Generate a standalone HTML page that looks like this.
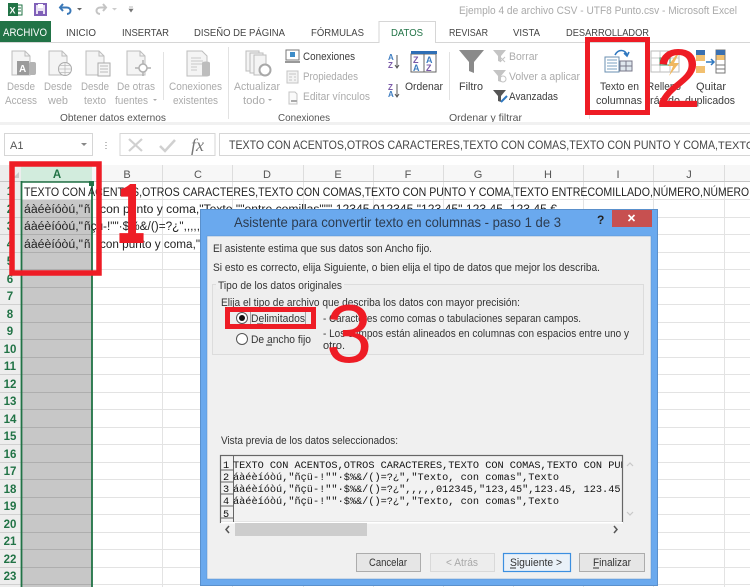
<!DOCTYPE html>
<html><head><meta charset="utf-8"><style>
html,body{margin:0;padding:0;background:#fff;width:750px;height:587px;overflow:hidden}
svg{display:block;filter:blur(.3px)}
text{font-family:"Liberation Sans",sans-serif;font-size:11px;fill:#444;white-space:pre}
.g{fill:#ababab}
.d{fill:#3c3c3c}
.t{font-size:10.5px;fill:#444}
.c{font-size:11.5px;fill:#222}
.h{font-size:11px;fill:#555;text-anchor:middle}
.r{font-size:11.5px;font-weight:bold;fill:#217346;text-anchor:middle}
.m{font-family:"Liberation Mono",monospace;font-size:10.25px;fill:#111}
.n{font-size:11px;fill:#333}
.big{font-size:83px;fill:#ee1c25}
.ic{fill:#f4f4f4;stroke:#bdbdbd;stroke-width:1}
</style></head><body>
<svg width="750" height="587" viewBox="0 0 750 587" xmlns="http://www.w3.org/2000/svg">
<defs><clipPath id="pv"><rect x="233" y="456" width="389" height="66"/></clipPath></defs>
<rect width="750" height="587" fill="#fff"/>

<!-- QAT -->
<rect x="13" y="5" width="9" height="10" fill="#fff" stroke="#217346"/>
<rect x="8" y="3" width="10" height="13" fill="#217346"/>
<text x="9.5" y="13.5" style="font-size:9px;font-weight:bold;fill:#fff">X</text>
<path d="M15 8h6M15 11h6" stroke="#217346"/>
<rect x="35" y="4" width="11" height="11" fill="#e9e2f3" stroke="#8060b8" stroke-width="2"/>
<rect x="38" y="4" width="5" height="4" fill="#fff"/><rect x="38" y="11" width="5" height="4" fill="#8060b8"/>
<path d="M63 4l-3 3.500 3 3.500M60.500 7.500h6c5 0 5.500 6 .5 6.500" fill="none" stroke="#3a78b8" stroke-width="2"/>
<path d="M77 8l2.500 2.500 2.500-2.500z" fill="#666"/>
<path d="M103 4l3 3.500-3 3.500M105.500 7.500h-5c-5 0-5.500 6-.5 6.500" fill="none" stroke="#c4c4c4" stroke-width="2"/>
<path d="M112 8l2.500 2.500 2.500-2.500z" fill="#ccc"/>
<path d="M129 7h4M129 9l2 3 2-3z" fill="#777" stroke="#777" stroke-width=".6"/>
<text x="459" y="14" textLength="278" lengthAdjust="spacingAndGlyphs" style="fill:#aaa;font-size:11px">Ejemplo 4 de archivo CSV - UTF8 Punto.csv - Microsoft Excel</text>

<!-- Tabs -->
<rect x="0" y="21" width="51" height="22" fill="#217346"/>
<path d="M0 42.500H379M436 42.500H750" stroke="#d6d6d6"/>
<path d="M379 43V21.500H435.500V43" fill="#fff" stroke="#d6d6d6"/>
<text x="3" y="36" textLength="44" lengthAdjust="spacingAndGlyphs" style="fill:#fff;font-size:11px">ARCHIVO</text>
<text class="t" x="66" y="36" textLength="30" lengthAdjust="spacingAndGlyphs">INICIO</text>
<text class="t" x="122" y="36" textLength="47" lengthAdjust="spacingAndGlyphs">INSERTAR</text>
<text class="t" x="194" y="36" textLength="91" lengthAdjust="spacingAndGlyphs">DISEÑO DE PÁGINA</text>
<text class="t" x="311" y="36" textLength="53" lengthAdjust="spacingAndGlyphs">FÓRMULAS</text>
<text class="t" x="391" y="36" textLength="32" lengthAdjust="spacingAndGlyphs" style="fill:#217346">DATOS</text>
<text class="t" x="449" y="36" textLength="39" lengthAdjust="spacingAndGlyphs">REVISAR</text>
<text class="t" x="513" y="36" textLength="27" lengthAdjust="spacingAndGlyphs">VISTA</text>
<text class="t" x="566" y="36" textLength="83" lengthAdjust="spacingAndGlyphs">DESARROLLADOR</text>

<!-- Ribbon icons -->
<g id="docs">
<path class="ic" d="M12 51h13l5 5v19H12z"/><path d="M25 51v5h5" fill="none" stroke="#bdbdbd"/>
<rect x="17" y="61" width="12" height="14" fill="#9a9a9a"/><text x="19" y="72" style="font-size:10px;font-weight:bold;fill:#fff">A</text>
<rect x="29" y="62" width="7" height="13" rx="2" fill="#b4b4b4"/>
<path class="ic" d="M49 51h13l5 5v19H49z"/><path d="M62 51v5h5" fill="none" stroke="#bdbdbd"/>
<circle cx="65" cy="69" r="6.500" fill="#f6f6f6" stroke="#aaa"/><path d="M58.500 69h13M65 62.500v13M60 65.500h10M60 72.500h10" stroke="#bbb" stroke-width=".8"/>
<path class="ic" d="M86 51h13l5 5v19H86z"/><path d="M99 51v5h5" fill="none" stroke="#bdbdbd"/>
<rect x="98" y="63" width="12" height="13" fill="#f6f6f6" stroke="#aaa"/><path d="M100 66h8M100 69h8M100 72h8" stroke="#bbb"/>
<path class="ic" d="M127 51h13l5 5v19h-18z"/><path d="M140 51v5h5" fill="none" stroke="#bdbdbd"/>
<circle cx="143" cy="68" r="4" fill="#fff" stroke="#b0b0b0" stroke-width="1.500"/><path d="M143 60v4M143 72v4M135 68h4M147 68h4" stroke="#b0b0b0" stroke-width="1.500"/>
<path class="ic" d="M187 51h15l5 5v20h-20z"/><path d="M191 58h10M191 61h12M191 64h12M191 67h6M191 70h6" stroke="#c8c8c8"/>
<path d="M202 63c0-2 8-2 8 0v12c0 2-8 2-8 0z" fill="#bdbdbd"/>
<path class="ic" d="M246 51h13v20h-13z"/><path class="ic" d="M250 53h13v20h-13z"/><path class="ic" d="M254 55h12v20h-12z"/>
<circle cx="265" cy="70" r="5.500" fill="#fff" stroke="#a8a8a8" stroke-width="2"/>
</g>
<rect x="163" y="52" width="1" height="48" fill="#e2e2e2"/>
<rect x="228" y="47" width="1" height="72" fill="#e2e2e2"/>
<rect x="449" y="52" width="1" height="48" fill="#e2e2e2"/>
<rect x="589" y="47" width="1" height="72" fill="#e2e2e2"/>
<!-- small icons -->
<rect x="286" y="50" width="13" height="10" fill="#fff" stroke="#777"/><rect x="290" y="52" width="5" height="5" fill="#3d8cc8"/><path d="M285 62h15" stroke="#777" stroke-width="1.500"/>
<rect x="287" y="71" width="11" height="12" fill="#f3f3f3" stroke="#c4c4c4"/><path d="M289 74h7M289 77h3M294 77h2M289 80h3M294 80h2" stroke="#c4c4c4"/>
<path d="M289 92h6l2 2v10h-8z" fill="#fafafa" stroke="#c4c4c4"/><path d="M291 101h6" stroke="#aaa" stroke-width="2"/>
<text x="303" y="60" textLength="52" lengthAdjust="spacingAndGlyphs" class="d">Conexiones</text>
<text x="303" y="80" textLength="55" lengthAdjust="spacingAndGlyphs" class="g">Propiedades</text>
<text x="303" y="100" textLength="67" lengthAdjust="spacingAndGlyphs" class="g">Editar vínculos</text>
<!-- Sort -->
<text x="388" y="60" style="font-size:8px;font-weight:bold;fill:#3d7cc0">A</text><text x="388" y="68" style="font-size:8px;font-weight:bold;fill:#7a5aa8">Z</text>
<path d="M397 55v12M395 65l2 3 2-3" fill="none" stroke="#555"/>
<text x="388" y="90" style="font-size:8px;font-weight:bold;fill:#7a5aa8">Z</text><text x="388" y="97" style="font-size:8px;font-weight:bold;fill:#3d7cc0">A</text>
<path d="M397 84v12M395 94l2 3 2-3" fill="none" stroke="#555"/>
<rect x="411" y="54" width="25" height="18" fill="#fff" stroke="#666"/><rect x="411" y="51" width="26" height="3" fill="#2f6fb5"/><path d="M424 54v18" stroke="#666"/>
<text x="413" y="63" style="font-size:9px;font-weight:bold;fill:#7a5aa8">Z</text><text x="413" y="71" style="font-size:9px;font-weight:bold;fill:#3d7cc0">A</text>
<text x="426" y="63" style="font-size:9px;font-weight:bold;fill:#3d7cc0">A</text><text x="426" y="71" style="font-size:9px;font-weight:bold;fill:#7a5aa8">Z</text>
<path d="M459 50h25l-10 12v11l-5-2v-9z" fill="#8a8a8a"/>
<path d="M493 50h13l-5 6v6l-3-1v-5z" fill="#c4c4c4"/><path d="M500 57l5 5M505 57l-5 5" stroke="#c4c4c4"/>
<path d="M493 70h13l-5 6v6l-3-1v-5z" fill="#c4c4c4"/><circle cx="503" cy="79" r="3" fill="none" stroke="#c4c4c4"/>
<path d="M493 90h13l-5 6v6l-3-1v-5z" fill="#555"/><path d="M501 102l6-6" stroke="#2f78c0" stroke-width="2"/>
<!-- Texto en columnas icon -->
<rect x="605" y="57" width="14" height="15" fill="#fff" stroke="#6a8fb0"/><path d="M607 60h10M607 63h10M607 66h10M607 69h10" stroke="#7aa0c0"/>
<rect x="620" y="61" width="12" height="10" fill="#dfe7ee" stroke="#778"/><path d="M626 61v10M620 66h12" stroke="#778"/>
<path d="M615 55c3-6 10-6 12 0M624 53l3 3 2-4" fill="none" stroke="#2f78c0" stroke-width="1.600"/>
<!-- Relleno -->
<rect x="651" y="51" width="28" height="21" fill="#fff" stroke="#bbb"/><path d="M651 58h28M651 65h28M660 51v21M670 51v21" stroke="#c8c8c8"/><rect x="660" y="58" width="10" height="7" fill="none" stroke="#3c9a68"/>
<path d="M676 55l-8 11h5l-4 10 10-13h-5l4-8z" fill="#f0b860"/>
<!-- Quitar -->
<rect x="696" y="50" width="9" height="23" fill="#f2c070"/><rect x="696" y="50" width="9" height="5" fill="#3a70b0"/><rect x="696" y="61" width="9" height="5" fill="#fff"/>
<path d="M706 62h7M711 59l3 3-3 3" fill="none" stroke="#2f78c0" stroke-width="1.500"/>
<rect x="716" y="50" width="9" height="23" fill="#fff" stroke="#777"/><rect x="716" y="50" width="9" height="5" fill="#3a70b0"/><rect x="716.500" y="55" width="8" height="5" fill="#f2c070"/><path d="M716 65h9M716 69h9" stroke="#777"/>
<!-- Ribbon labels -->
<g class="g">
<text class="g" x="7" y="90" textLength="28" lengthAdjust="spacingAndGlyphs">Desde</text><text class="g" x="5" y="104" textLength="32" lengthAdjust="spacingAndGlyphs">Access</text>
<text class="g" x="44" y="90" textLength="28" lengthAdjust="spacingAndGlyphs">Desde</text><text class="g" x="48" y="104" textLength="20" lengthAdjust="spacingAndGlyphs">web</text>
<text class="g" x="81" y="90" textLength="28" lengthAdjust="spacingAndGlyphs">Desde</text><text class="g" x="84" y="104" textLength="22" lengthAdjust="spacingAndGlyphs">texto</text>
<text class="g" x="117" y="90" textLength="38" lengthAdjust="spacingAndGlyphs">De otras</text><text class="g" x="115" y="104" textLength="33" lengthAdjust="spacingAndGlyphs">fuentes</text>
<text class="g" x="169" y="90" textLength="53" lengthAdjust="spacingAndGlyphs">Conexiones</text><text class="g" x="173" y="104" textLength="45" lengthAdjust="spacingAndGlyphs">existentes</text>
<text class="g" x="234" y="90" textLength="46" lengthAdjust="spacingAndGlyphs">Actualizar</text><text class="g" x="243" y="104" textLength="22" lengthAdjust="spacingAndGlyphs">todo</text>
</g>
<path d="M153 99l2 2 2-2zM268 99l2 2 2-2z" fill="#aaa"/>
<text x="60" y="121" textLength="106" lengthAdjust="spacingAndGlyphs" style="fill:#555;font-size:10.500px">Obtener datos externos</text>
<text x="278" y="121" textLength="52" lengthAdjust="spacingAndGlyphs" style="fill:#555;font-size:10.500px">Conexiones</text>
<text x="449" y="121" textLength="73" lengthAdjust="spacingAndGlyphs" style="fill:#555;font-size:10.500px">Ordenar y filtrar</text>
<text x="405" y="90" textLength="38" lengthAdjust="spacingAndGlyphs" class="d">Ordenar</text>
<text x="459" y="90" textLength="24" lengthAdjust="spacingAndGlyphs" class="d">Filtro</text>
<text x="509" y="60" textLength="29" lengthAdjust="spacingAndGlyphs" class="g">Borrar</text>
<text x="509" y="80" textLength="71" lengthAdjust="spacingAndGlyphs" class="g">Volver a aplicar</text>
<text x="509" y="100" textLength="49" lengthAdjust="spacingAndGlyphs" class="d">Avanzadas</text>
<text x="600" y="90" textLength="39" lengthAdjust="spacingAndGlyphs" class="d">Texto en</text>
<text x="596" y="104" textLength="46" lengthAdjust="spacingAndGlyphs" class="d">columnas</text>
<text x="647" y="90" textLength="34" lengthAdjust="spacingAndGlyphs" class="d">Relleno</text>
<text x="650" y="104" textLength="30" lengthAdjust="spacingAndGlyphs" class="d">rápido</text>
<text x="696" y="90" textLength="30" lengthAdjust="spacingAndGlyphs" class="d">Quitar</text>
<text x="685" y="104" textLength="50" lengthAdjust="spacingAndGlyphs" class="d">duplicados</text>
<rect x="0" y="122" width="750" height="3" fill="#f1f1f1"/>

<!-- Formula bar -->
<rect x="4.500" y="133.500" width="88" height="22" fill="#fff" stroke="#d6d6d6"/>
<text x="10" y="149" style="font-size:11px;fill:#555">A1</text>
<path d="M81 143l3 3 3-3z" fill="#888"/>
<path d="M106 142v1M106 145v1M106 148v1" stroke="#aaa" stroke-width="1.500"/>
<rect x="120" y="133.500" width="95" height="22" fill="#fff" stroke="#d6d6d6"/>
<path d="M129 139l13 12M142 139l-13 12" stroke="#d0d0d0" stroke-width="2.200"/>
<path d="M160 146l5 5 10-11" fill="none" stroke="#d0d0d0" stroke-width="2.500"/>
<text x="191" y="151" style="font-family:'Liberation Serif',serif;font-style:italic;font-size:18px;fill:#777">fx</text>
<rect x="219.500" y="133.500" width="540" height="22" fill="#fff" stroke="#d6d6d6"/>
<text x="229" y="149" textLength="489" lengthAdjust="spacingAndGlyphs" style="font-size:11.5px;fill:#444">TEXTO CON ACENTOS,OTROS CARACTERES,TEXTO CON COMAS,TEXTO CON PUNTO Y COMA,</text>
<text x="718" y="149" style="font-size:11px;fill:#444">TEXTO</text>

<!-- Grid headers -->
<rect x="0" y="165" width="750" height="17" fill="#f7f7f7"/>
<rect x="0" y="165" width="21" height="422" fill="#ededed"/>
<rect x="21" y="165" width="71" height="16" fill="#d2ecdd"/>
<path d="M0 181.500H750" stroke="#c6c6c6"/>
<path d="M13 178l6-6v6z" fill="#c8c8c8"/>
<g stroke="#e3e3e3">
<path d="M162.500 182V587M232.500 182V587M303.500 182V587M373.500 182V587M443.500 182V587M513.500 182V587M583.500 182V587M653.500 182V587M724.500 182V587"/>
<path d="M21 199.500H750M21 217.500H750M21 234.500H750M21 252.500H750M21 269.500H750M21 287.500H750M21 304.500H750M21 322.500H750M21 339.500H750M21 357.500H750M21 374.500H750M21 392.500H750M21 409.500H750M21 427.500H750M21 444.500H750M21 462.500H750M21 479.500H750M21 497.500H750M21 514.500H750M21 532.500H750M21 549.500H750M21 567.500H750M21 584.500H750"/>
</g>
<g stroke="#d0d0d0">
<path d="M0 199.500H21M0 217.500H21M0 234.500H21M0 252.500H21M0 269.500H21M0 287.500H21M0 304.500H21M0 322.500H21M0 339.500H21M0 357.500H21M0 374.500H21M0 392.500H21M0 409.500H21M0 427.500H21M0 444.500H21M0 462.500H21M0 479.500H21M0 497.500H21M0 514.500H21M0 532.500H21M0 549.500H21M0 567.500H21M0 584.500H21"/>
</g>
<rect x="22" y="200" width="70" height="387" fill="#c7c7c7"/>
<path d="M22 217.500H92M22 234.500H92M22 252.500H92M22 269.500H92M22 287.500H92M22 304.500H92M22 322.500H92M22 339.500H92M22 357.500H92M22 374.500H92M22 392.500H92M22 409.500H92M22 427.500H92M22 444.500H92M22 462.500H92M22 479.500H92M22 497.500H92M22 514.500H92M22 532.500H92M22 549.500H92M22 567.500H92M22 584.500H92" stroke="#aeaeae"/>
<path d="M21.500 181V587M92 181V587" stroke="#217346" stroke-width="1.800"/>
<path d="M21 182H92" stroke="#217346" stroke-width="1.500"/>
<rect x="89" y="181" width="5" height="5" fill="#217346"/>
<text x="57" y="178" style="font-size:11.500px;font-weight:bold;fill:#217346;text-anchor:middle">A</text>
<text class="h" x="127" y="178">B</text><text class="h" x="198" y="178">C</text><text class="h" x="267" y="178">D</text><text class="h" x="338" y="178">E</text><text class="h" x="408" y="178">F</text><text class="h" x="478" y="178">G</text><text class="h" x="548" y="178">H</text><text class="h" x="618" y="178">I</text><text class="h" x="689" y="178">J</text>
<path d="M162.500 165V181M232.500 165V181M303.500 165V181M373.500 165V181M443.500 165V181M513.500 165V181M583.500 165V181M653.500 165V181M724.500 165V181" stroke="#ddd"/>

<text class="r" x="10" y="195">1</text><text class="r" x="10" y="213">2</text><text class="r" x="10" y="230">3</text><text class="r" x="10" y="248">4</text><text class="r" x="10" y="265">5</text><text class="r" x="10" y="283">6</text><text class="r" x="10" y="300">7</text><text class="r" x="10" y="318">8</text><text class="r" x="10" y="335">9</text><text class="r" x="10" y="353">10</text><text class="r" x="10" y="370">11</text><text class="r" x="10" y="388">12</text><text class="r" x="10" y="405">13</text><text class="r" x="10" y="423">14</text><text class="r" x="10" y="440">15</text><text class="r" x="10" y="458">16</text><text class="r" x="10" y="475">17</text><text class="r" x="10" y="493">18</text><text class="r" x="10" y="510">19</text><text class="r" x="10" y="528">20</text><text class="r" x="10" y="545">21</text><text class="r" x="10" y="563">22</text><text class="r" x="10" y="580">23</text>

<!-- Cells -->
<text class="c" x="24" y="196" textLength="679" lengthAdjust="spacingAndGlyphs">TEXTO CON ACENTOS,OTROS CARACTERES,TEXTO CON COMAS,TEXTO CON PUNTO Y COMA,TEXTO ENTRECOMILLADO,NÚMERO,</text>
<text class="c" x="703" y="196" textLength="46" lengthAdjust="spacingAndGlyphs">NÚMERO</text>
<text class="c" x="24" y="213" textLength="59" lengthAdjust="spacingAndGlyphs">áàéèíóòú,"</text><text class="c" x="84" y="213">ñ</text>
<text class="c" x="100" y="213" textLength="457" lengthAdjust="spacingAndGlyphs">con punto y coma,"Texto ""entre comillas""",12345,012345,"123,45",123.45, 123.45 €</text>
<text class="c" x="24" y="230" textLength="59" lengthAdjust="spacingAndGlyphs">áàéèíóòú,"</text><text class="c" x="84" y="230" textLength="116" lengthAdjust="spacingAndGlyphs">ñçü-!""·$%&amp;/()=?¿",,,,,</text>
<text class="c" x="24" y="248" textLength="59" lengthAdjust="spacingAndGlyphs">áàéèíóòú,"</text><text class="c" x="84" y="248">ñ</text>
<text class="c" x="100" y="248" textLength="100" lengthAdjust="spacingAndGlyphs">con punto y coma,"</text>

<!-- Dialog -->
<rect x="200" y="209" width="458" height="377" fill="#6aa9ee"/>
<rect x="200.500" y="209.500" width="457" height="376" fill="none" stroke="#5a90cc"/>
<rect x="207" y="236" width="444" height="343" fill="#f0f0f0" stroke="#5d8fc8" stroke-width=".5"/>
<text x="234" y="227" textLength="327" lengthAdjust="spacingAndGlyphs" style="font-size:14px;fill:#2c3c50">Asistente para convertir texto en columnas - paso 1 de 3</text>
<text x="597" y="224" style="font-size:12px;font-weight:bold;fill:#222">?</text>
<rect x="612" y="210" width="40" height="17" fill="#c75050"/>
<path d="M628.500 215l6 6M634.500 215l-6 6" stroke="#fff" stroke-width="1.600"/>
<text class="n" x="213" y="252" textLength="219" lengthAdjust="spacingAndGlyphs">El asistente estima que sus datos son Ancho fijo.</text>
<text class="n" x="213" y="271" textLength="387" lengthAdjust="spacingAndGlyphs">Si esto es correcto, elija Siguiente, o bien elija el tipo de datos que mejor los describa.</text>
<rect x="212.500" y="284.500" width="431" height="70" fill="#eeeeee" stroke="#dcdcdc"/>
<rect x="216" y="280" width="128" height="9" fill="#f0f0f0"/>
<text class="n" x="218" y="289" textLength="124" lengthAdjust="spacingAndGlyphs">Tipo de los datos originales</text>
<text class="n" x="221" y="306" textLength="299" lengthAdjust="spacingAndGlyphs">Elija el tipo de archivo que describa los datos con mayor precisión:</text>
<circle cx="242" cy="318" r="5.500" fill="#fff" stroke="#555"/><circle cx="242" cy="318" r="3" fill="#111"/>
<circle cx="242" cy="339" r="5.500" fill="#fff" stroke="#555"/>
<rect x="250.500" y="311.500" width="55" height="14" fill="none" stroke="#555" stroke-dasharray="1 1"/>
<text class="n" x="251" y="322" textLength="54" lengthAdjust="spacingAndGlyphs">Delimitados</text>
<path d="M257 324h6M266 345h6" stroke="#333"/>
<text class="n" x="251" y="343" textLength="60" lengthAdjust="spacingAndGlyphs">De ancho fijo</text>
<text class="n" x="323" y="322" textLength="258" lengthAdjust="spacingAndGlyphs">- Caracteres como comas o tabulaciones separan campos.</text>
<text class="n" x="323" y="337" textLength="306" lengthAdjust="spacingAndGlyphs">- Los campos están alineados en columnas con espacios entre uno y</text>
<text class="n" x="323" y="349" textLength="22" lengthAdjust="spacingAndGlyphs">otro.</text>
<text class="n" x="221" y="444" textLength="177" lengthAdjust="spacingAndGlyphs">Vista previa de los datos seleccionados:</text>
<!-- Preview -->
<rect x="220.500" y="455.500" width="402" height="67" fill="#f2f2f2" stroke="#666" stroke-width="1.200"/>
<path d="M233.500 456V522M221 470H233M221 482H233M221 494H233M221 506H233M221 518H233" stroke="#666"/>
<text class="m" x="223" y="468">1</text><text class="m" x="223" y="480">2</text><text class="m" x="223" y="492">3</text><text class="m" x="223" y="504">4</text><text class="m" x="223" y="517">5</text>
<g clip-path="url(#pv)">
<text class="m" x="233" y="468">TEXTO CON ACENTOS,OTROS CARACTERES,TEXTO CON COMAS,TEXTO CON PUNTO</text>
<text class="m" x="233" y="480">áàéèíóòú,"ñçü-!""·$%&amp;/()=?¿","Texto, con comas",Texto</text>
<text class="m" x="233" y="492">áàéèíóòú,"ñçü-!""·$%&amp;/()=?¿",,,,,012345,"123,45",123.45, 123.45</text>
<text class="m" x="233" y="504">áàéèíóòú,"ñçü-!""·$%&amp;/()=?¿","Texto, con comas",Texto</text>
</g>
<rect x="220" y="523" width="403" height="15" fill="#f0f0f0"/>
<rect x="221" y="522" width="402" height="1.500" fill="#fff"/>
<rect x="235" y="523" width="132" height="13" fill="#cdcdcd"/>
<path d="M229 526l-3 3.500 3 3.500M614 526l3 3.500-3 3.500" fill="none" stroke="#555" stroke-width="1.500"/>
<path d="M627 466l3-3 3 3M627 512l3 3 3-3" fill="none" stroke="#c8c8c8" stroke-width="1.200"/>
<!-- Buttons -->
<rect x="356.500" y="553.500" width="64" height="18" fill="#e6e6e6" stroke="#acacac"/>
<rect x="430.500" y="553.500" width="64" height="18" fill="#ededed" stroke="#d9d9d9"/>
<rect x="503.500" y="553.500" width="67" height="18" fill="#eaf1f8" stroke="#3c8fe0" stroke-width="1.200"/>
<rect x="579.500" y="553.500" width="65" height="18" fill="#e6e6e6" stroke="#acacac"/>
<text class="n" x="369" y="566" textLength="38" lengthAdjust="spacingAndGlyphs">Cancelar</text>
<text class="n" x="446" y="566" textLength="32" lengthAdjust="spacingAndGlyphs" style="fill:#a8a8a8">&lt; Atrás</text>
<text class="n" x="510" y="566" textLength="52" lengthAdjust="spacingAndGlyphs">Siguiente &gt;</text>
<text class="n" x="593" y="566" textLength="38" lengthAdjust="spacingAndGlyphs">Finalizar</text>
<path d="M510 568h6M593 568h6" stroke="#333"/>

<!-- Annotations -->
<rect x="12" y="164" width="87" height="109" fill="none" stroke="#ee1c25" stroke-width="5.500"/>
<rect x="587.500" y="39.500" width="60" height="73" fill="none" stroke="#ee1c25" stroke-width="5"/>
<rect x="227.500" y="309.500" width="86" height="17" fill="none" stroke="#ee1c25" stroke-width="5"/>
<text x="115" y="243" textLength="32" lengthAdjust="spacingAndGlyphs" style="font-family:'Noto Sans CJK JP',sans-serif;font-weight:bold;font-size:82px;fill:#ee1c25">1</text>
<text class="big" x="655" y="107">2</text>
<text class="big" x="326" y="362">3</text>
</svg>
</body></html>
